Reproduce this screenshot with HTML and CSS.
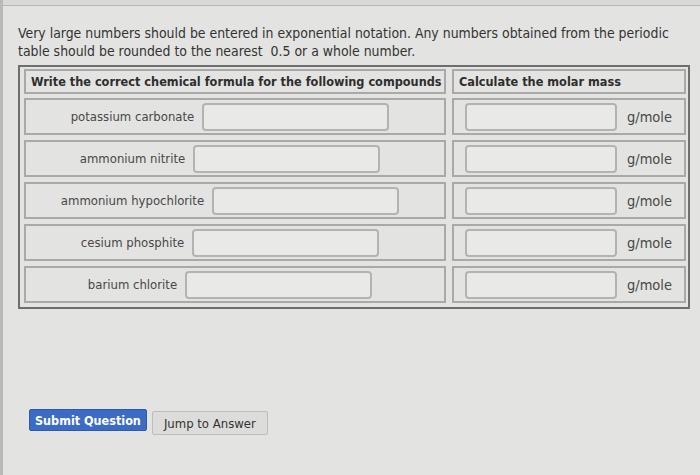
FILE: index.html
```html
<!DOCTYPE html>
<html lang="en">
<head>
  <meta charset="UTF-8" />
  <title>Question</title>
  <link rel="stylesheet" href="styles.css">
</head>
<body>
  <div class="topbar"></div>
  <div class="pagina">
    <p class="instrucao">Very large numbers should be entered in exponential notation. Any numbers obtained from the periodic table should be rounded to the nearest &nbsp;0.5 or a whole number.</p>

    <div class="tabela">
      <div class="cab">Write the correct chemical formula for the following compounds</div>
      <div class="cab">Calculate the molar mass</div>

      <div class="cel-formula"><span>potassium carbonate</span><input type="text"></div>
      <div class="cel-massa"><input type="text"><span>g/mole</span></div>

      <div class="cel-formula"><span>ammonium nitrite</span><input type="text"></div>
      <div class="cel-massa"><input type="text"><span>g/mole</span></div>

      <div class="cel-formula"><span>ammonium hypochlorite</span><input type="text"></div>
      <div class="cel-massa"><input type="text"><span>g/mole</span></div>

      <div class="cel-formula"><span>cesium phosphite</span><input type="text"></div>
      <div class="cel-massa"><input type="text"><span>g/mole</span></div>

      <div class="cel-formula"><span>barium chlorite</span><input type="text"></div>
      <div class="cel-massa"><input type="text"><span>g/mole</span></div>
    </div>

    <div class="botoes">
      <button class="btn-submit">Submit Question</button>
      <button class="btn-jump">Jump to Answer</button>
    </div>
  </div>
</body>
</html>
```

FILE: styles.css
```css
* {
  box-sizing: border-box;
}

body {
  margin: 0;
  font-family: "DejaVu Sans Condensed", "Noto Sans", sans-serif;
  background: #e3e3e1;
  border-left: 3px solid #b9b9b7;
  height: 475px;
  color: #3a3a3a;
}

.topbar {
  height: 6px;
  background: #d9d9d7;
  border-bottom: 1px solid #b5b5b3;
}

.pagina {
  padding: 0 0 0 15px;
}

.instrucao {
  margin: 18px 0 0;
  font-size: 13.9px;
  line-height: 18px;
  width: 670px;
  color: #333;
}

.tabela {
  margin-top: 5px;
  width: 672px;
  border: 2px solid #6e6e6e;
  padding: 2px 2px 4px 4px;
  display: grid;
  grid-template-columns: 422px 234px;
  grid-auto-rows: 37px;
  grid-template-rows: 24px;
  column-gap: 6px;
  row-gap: 5px;
}

.cab {
  border: 2px solid #a9a9a7;
  font-weight: bold;
  font-size: 12.6px;
  white-space: nowrap;
  padding: 0 5px;
  display: flex;
  align-items: center;
  color: #2e2e2e;
  margin-bottom: -1px;
}

.cel-formula,
.cel-massa {
  border: 2px solid #a9a9a7;
  display: flex;
  align-items: center;
  font-size: 13px;
  color: #484848;
}

.cel-formula {
  justify-content: center;
  gap: 8px;
  padding-right: 10px;
}

.cel-massa {
  justify-content: flex-end;
  gap: 10px;
  padding-right: 12px;
}

.cel-massa span {
  font-size: 14.5px;
}

input {
  height: 28px;
  border: 2px solid #b3b3b1;
  border-radius: 4px;
  background: #e9e9e7;
}

.cel-formula input {
  width: 187px;
}

.cel-massa input {
  width: 152px;
}

.botoes {
  margin-top: 100px;
  display: flex;
  gap: 5px;
  padding-left: 11px;
  align-items: flex-start;
}

button {
  font-family: "DejaVu Sans Condensed", "Noto Sans", sans-serif;
  font-size: 12.5px;
  border-radius: 2px;
  cursor: pointer;
}

.btn-submit {
  background: #3b6bc4;
  color: #fff;
  font-weight: bold;
  border: 1px solid #2f5aa8;
  height: 22px;
  padding: 0 5px;
  font-size: 12.5px;
}

.btn-jump {
  background: #dcdcda;
  color: #333;
  border: 1px solid #bdbdbb;
  height: 24px;
  margin-top: 2px;
  padding: 0 11px;
  font-size: 13px;
}
```
